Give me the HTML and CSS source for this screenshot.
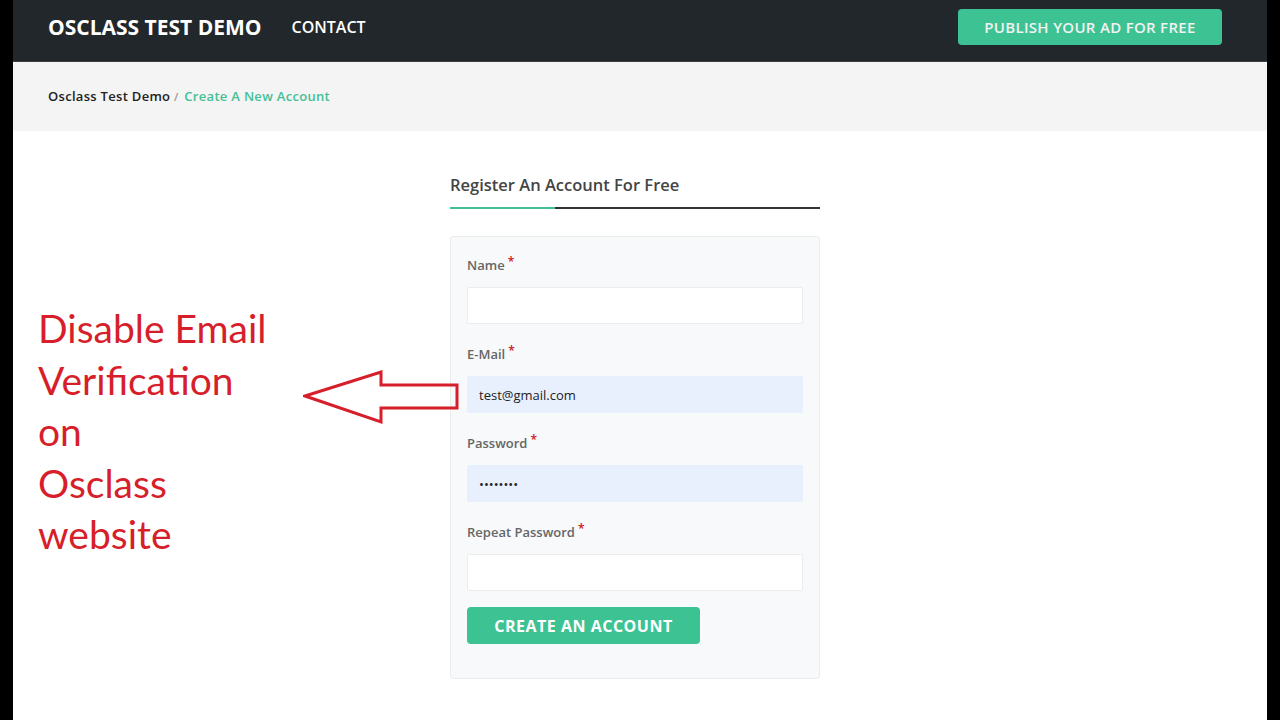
FILE: index.html
```html
<!DOCTYPE html>
<html lang="en">

<head>
    <meta charset="UTF-8">
    <meta name="viewport" content="width=device-width, initial-scale=1.0">
    <title>Create A New Account - Osclass Test Demo</title>
    <link rel="stylesheet" href="styles.css">
</head>

<body>
    <div class="page">

        <!-- Header -->
        <header class="site-header">
            <nav class="main-nav">
                <a class="logo" href="#">OSCLASS TEST DEMO</a>
                <a class="nav-link" href="#">CONTACT</a>
            </nav>
            <a class="publish-btn" href="#">PUBLISH YOUR AD FOR FREE</a>
        </header>

        <!-- Breadcrumb -->
        <div class="breadcrumb">
            <a href="#" class="crumb-home">Osclass Test Demo</a>
            <span class="crumb-sep">/</span>
            <span class="crumb-current">Create A New Account</span>
        </div>

        <!-- Register -->
        <main class="content">
            <div class="register">
                <h2 class="register-title">Register An Account For Free</h2>

                <form class="register-form">
                    <div class="form-group">
                        <label for="name">Name<sup>*</sup></label>
                        <input type="text" id="name" name="name">
                    </div>
                    <div class="form-group">
                        <label for="email">E-Mail<sup>*</sup></label>
                        <input type="text" id="email" name="email" class="autofill" value="test@gmail.com">
                    </div>
                    <div class="form-group">
                        <label for="password">Password<sup>*</sup></label>
                        <input type="password" id="password" name="password" class="autofill" value="12345678">
                    </div>
                    <div class="form-group">
                        <label for="password2">Repeat Password<sup>*</sup></label>
                        <input type="password" id="password2" name="password2">
                    </div>
                    <button type="submit" class="create-btn">CREATE AN ACCOUNT</button>
                </form>
            </div>

            <!-- Annotation -->
            <p class="note">Disable Email<br>Verification<br>on<br>Osclass<br>website</p>
            <svg class="note-arrow" width="160" height="56" viewBox="0 0 160 56">
                <polygon points="2,26 78,2 78,15 154,15 154,38 78,38 78,52"
                    fill="none" stroke="#d71f2b" stroke-width="3" stroke-linejoin="miter" />
            </svg>
        </main>

    </div>
</body>

</html>
```

FILE: styles.css
```css
/* Basic Reset */
* {
    margin: 0;
    padding: 0;
    box-sizing: border-box;
}

body {
    background: #000;
    font-family: 'Open Sans', 'Noto Sans', sans-serif;
    height: 720px;
    overflow: hidden;
}

a {
    text-decoration: none;
}

/* Page frame */
.page {
    margin: 0 13px;
    height: 720px;
    background: #fff;
}

/* Header */
.site-header {
    height: 62px;
    background: #22272b;
    border-bottom: 1px solid #3a3f43;
    display: flex;
    justify-content: space-between;
    align-items: flex-start;
    padding: 9px 45px 0 35px;
}

.main-nav {
    display: flex;
    align-items: center;
    height: 36px;
    gap: 30px;
}

.logo {
    color: #fff;
    font-size: 21px;
    font-weight: 700;
}

.nav-link {
    color: #fff;
    font-size: 16px;
    font-weight: 600;
}

.publish-btn {
    display: block;
    width: 264px;
    height: 36px;
    line-height: 36px;
    text-align: center;
    background: #3dc293;
    color: #f2f2f2;
    border-radius: 4px;
    font-size: 15px;
    font-weight: 600;
    letter-spacing: 0.3px;
}

/* Breadcrumb */
.breadcrumb {
    height: 69px;
    background: #f4f4f4;
    padding: 25px 35px 0;
    font-size: 13px;
    font-weight: 600;
    letter-spacing: 0.3px;
}

.crumb-home {
    color: #222;
}

.crumb-sep {
    color: #999;
    font-size: 11px;
    margin: 0 2px 0 0;
}

.crumb-current {
    color: #45c094;
}

/* Content */
.content {
    position: relative;
    height: 589px;
}

.register {
    width: 370px;
    margin-left: 437px;
    padding-top: 42px;
}

.register-title {
    font-size: 16.5px;
    font-weight: 600;
    color: #444;
    padding-bottom: 11px;
    border-bottom: 2px solid #333;
    position: relative;
}

.register-title::after {
    content: "";
    position: absolute;
    left: 0;
    bottom: -2px;
    width: 105px;
    height: 2px;
    background: #45c094;
}

.register-form {
    margin-top: 27px;
    background: #f7f9fa;
    border: 1px solid #ebeded;
    border-radius: 3px;
    padding: 19px 16px 34px;
}

.form-group {
    margin-bottom: 21px;
}

.form-group label {
    display: block;
    font-size: 13px;
    font-weight: 600;
    color: #666;
    line-height: 18px;
    margin-bottom: 13px;
}

.form-group label sup {
    color: #d0101b;
    font-size: 12px;
    margin-left: 3px;
    vertical-align: 4px;
    line-height: 0;
}

.form-group input {
    display: block;
    width: 100%;
    height: 37px;
    padding: 0 11px;
    background: #fff;
    border: 1px solid #ebeded;
    border-radius: 2px;
    font-family: 'Open Sans', sans-serif;
    font-size: 13px;
    color: #222;
    outline: none;
}

.form-group input.autofill {
    background: #e8f0fe;
    border-color: #e8f0fe;
}

.form-group input[type="password"] {
    font-size: 13px;
    letter-spacing: 0;
}

.form-group:last-of-type {
    margin-bottom: 16px;
}

.create-btn {
    width: 233px;
    height: 37px;
    background: #3dc293;
    color: #fff;
    border: none;
    border-radius: 4px;
    font-family: 'Open Sans', sans-serif;
    font-size: 16px;
    font-weight: 700;
    letter-spacing: 0.5px;
}

/* Annotation over the page */
.note {
    position: absolute;
    left: 25px;
    top: 172px;
    font-family: Lato, 'Liberation Sans', sans-serif;
    font-size: 39px;
    line-height: 51.5px;
    color: #d71f2b;
}

.note-arrow {
    position: absolute;
    left: 290px;
    top: 239px;
}
```
